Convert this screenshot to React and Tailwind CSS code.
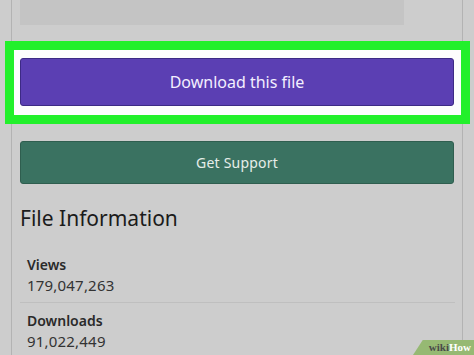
export default function App() {
  return (
    <div
      className="relative w-[474px] h-[355px] overflow-hidden bg-[#cdcdcd]"
      style={{ fontFamily: '"Noto Sans", "Open Sans", sans-serif' }}
    >
      <div className="ml-[11px] w-[452px] h-[355px] border-x border-[#b3b3b3]">
        <div className="ml-[8px] w-[384px] h-[25px] bg-[#c4c4c4]" />

        <div className="mt-[16px] -ml-[7px] w-[465px] h-[83px] border-[9px] border-[#22f02b] bg-[#fdfdfd] pl-[6px] pt-[8px]">
          <button className="flex w-[434px] h-[48px] items-center justify-center rounded-[3px] border border-[#3d2a85] bg-[#5b3fb3] text-[16px] text-[#f3efff]">
            Download this file
          </button>
        </div>

        <button className="mt-[17px] ml-[8px] flex w-[434px] h-[43px] items-center justify-center rounded-[3px] border border-[#2f5e4f] bg-[#3a7261] text-[14px] tracking-[0.2px] text-[#e6eee9]">
          Get Support
        </button>

        <h2 className="mt-[20px] ml-[8px] text-[21px] leading-[28px] text-[#1b1b1b]">
          File Information
        </h2>

        <div className="mt-[24px] ml-[15px] text-[#2a2a2a]">
          <div className="text-[14px] leading-[18px] font-semibold">Views</div>
          <div className="mt-[1px] text-[15px] leading-[20px] tracking-[0.2px] text-[#333]">179,047,263</div>
        </div>

        <div className="mt-[7px] ml-[8px] w-[435px] h-px bg-[#bfbfbf]" />

        <div className="mt-[9px] ml-[15px] text-[#2a2a2a]">
          <div className="text-[14px] leading-[18px] font-semibold">Downloads</div>
          <div className="mt-[1px] text-[15px] leading-[20px] tracking-[0.2px] text-[#333]">91,022,449</div>
        </div>
      </div>

      <div className="absolute right-0 bottom-0 flex h-[15px] w-[61px] items-center justify-end pr-[3px] bg-[#96b973] [clip-path:polygon(16%_0,100%_0,100%_100%,0_100%)]">
        <span
          className="text-[11px] leading-none font-bold text-[#4a4a4a]"
          style={{ fontFamily: '"Liberation Serif", serif' }}
        >
          wiki<span className="text-white">How</span>
        </span>
      </div>
    </div>
  );
}
